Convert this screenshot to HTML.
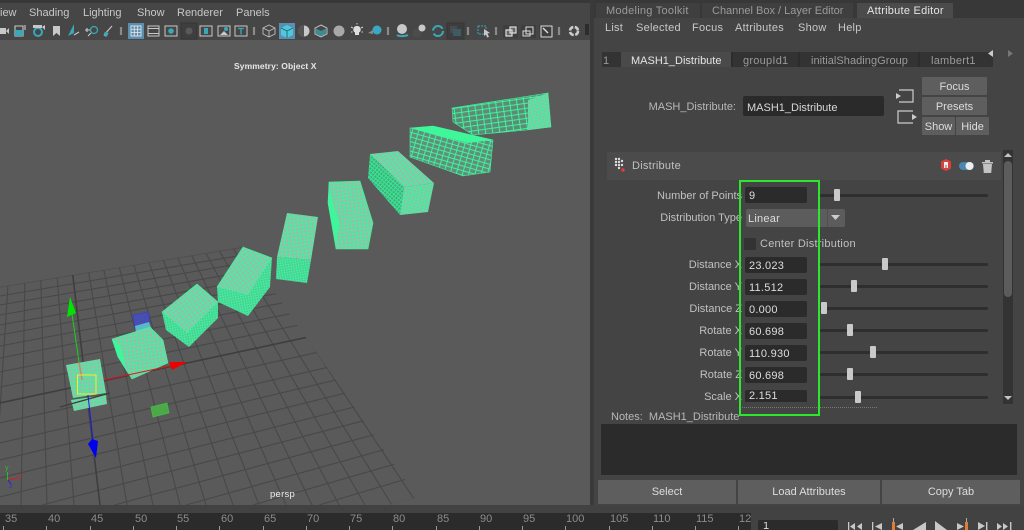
<!DOCTYPE html>
<html style="height:530px;overflow:hidden"><head><meta charset="utf-8"><style>
html,body{margin:0;padding:0;background:#444}
body{width:1024px;height:530px;overflow:hidden;position:relative;font-family:"Liberation Sans",sans-serif;font-size:11px;color:#c8c8c8}
#w{position:absolute;left:0;top:0;width:1024px;height:530px;overflow:hidden}
.a,.t{position:absolute}
.t{white-space:nowrap;line-height:14px;letter-spacing:.25px}
.z{letter-spacing:0}
.r{text-align:right}
.f{position:absolute;background:#2b2b2b;border-radius:2px;left:745px;width:62px;height:16px}
.tr{position:absolute;left:820px;width:168px;height:3px;background:#2e2e2e;border-radius:2px}
.th{position:absolute;width:6px;height:12px;background:#c9c9c9;border-radius:1px}
.b{position:absolute;background:#5e5e5e;text-align:center;color:#ddd;border-radius:1px}
.g{color:#9a9a9a}
</style></head><body><div id="w">
<div class="a" style="left:0;top:0;width:1024px;height:3px;background:#383838"></div>
<div class="a" style="left:0;top:3px;width:592px;height:37px;background:#464646"></div>
<div class="a" style="left:0;top:40px;width:590px;height:465px;background:#5a5a5a"></div>
<div class="a" style="left:590px;top:0;width:4px;height:505px;background:#3a3a3a"></div>

<div class="t z" style="left:0;top:6px">iew</div>
<div class="t z" style="left:29px;top:6px">Shading</div>
<div class="t z" style="left:83px;top:6px">Lighting</div>
<div class="t z" style="left:137px;top:6px">Show</div>
<div class="t z" style="left:177px;top:6px">Renderer</div>
<div class="t z" style="left:236px;top:6px">Panels</div>

<svg class="a" style="left:0;top:0" width="1024" height="530" viewBox="0 0 1024 530">
<defs>
<clipPath id="gc"><polygon points="-400,353 243,247 417,497 390,505 -400,505"/></clipPath>
<pattern id="m1" width="4" height="3.500" patternUnits="userSpaceOnUse" patternTransform="rotate(-8)"><rect width="4" height="3.500" fill="#98bcac"/><path d="M0 .5H4M.5 0V3.500" stroke="#44f09c" stroke-width="1" fill="none"/></pattern>
<pattern id="m2" width="3.500" height="3" patternUnits="userSpaceOnUse" patternTransform="rotate(15)"><rect width="3.500" height="3" fill="#8cc0a9"/><path d="M0 .5H3.500M.5 0V3" stroke="#44f09c" stroke-width="1" fill="none"/></pattern>
<pattern id="m3" width="3" height="3" patternUnits="userSpaceOnUse" patternTransform="rotate(40)"><rect width="3" height="3" fill="#46a980"/><path d="M0 .5H3M.5 0V3" stroke="#36e890" stroke-width="1" fill="none"/></pattern>
<pattern id="m4" width="4" height="3.500" patternUnits="userSpaceOnUse" patternTransform="rotate(-35)"><rect width="4" height="3.500" fill="#98bcac"/><path d="M0 .5H4M.5 0V3.500" stroke="#46f0a0" stroke-width="1" fill="none"/></pattern>
<pattern id="m5" width="7" height="5" patternUnits="userSpaceOnUse" patternTransform="rotate(-8)"><rect width="7" height="5" fill="#5e8b78"/><path d="M0 .5H7M.5 0V5" stroke="#3cf59a" stroke-width="1" fill="none"/></pattern>
<pattern id="m6" width="6" height="4.500" patternUnits="userSpaceOnUse" patternTransform="rotate(16)"><rect width="6" height="4.500" fill="#638e7c"/><path d="M0 .5H6M.5 0V4.500" stroke="#3cf59a" stroke-width="1" fill="none"/></pattern>
<pattern id="m7" width="2.500" height="2.500" patternUnits="userSpaceOnUse" patternTransform="rotate(-10)"><rect width="2.500" height="2.500" fill="#52c496"/><path d="M0 .5H2.500M.5 0V2.500" stroke="#3cf59a" stroke-width=".8" fill="none"/></pattern>
</defs>

<g clip-path="url(#gc)" fill="none" stroke="#484848" stroke-width="1.100">
<path d="M2350 -100L0 287M2350 -100L0 296M2350 -100L0 305M2350 -100L0 315M2350 -100L0 325M2350 -100L0 335M2350 -100L0 346M2350 -100L0 358M2350 -100L0 372M2350 -100L0 387M2350 -100L0 423M2350 -100L0 443M2350 -100L0 460M2350 -100L0 478M2350 -100L0 497M2350 -100L42 505M2350 -100L114.500 505M2350 -100L186 505M2350 -100L253 505M2350 -100L319 505M2350 -100L392 505"/>
<path d="M31 -78L-6 505M31 -78L21 505M31 -78L47 505M31 -78L74 505M31 -78L127 505M31 -78L153 505M31 -78L180 505M31 -78L206 505M31 -78L233 505M31 -78L259 505M31 -78L286 505M31 -78L312 505M31 -78L339 505M31 -78L365 505M31 -78L392 505M31 -78L418 505"/>
<path d="M2350 -100L0 403M31 -78L100 505" stroke="#3e3e3e" stroke-width="1.600"/>
</g>

<!-- boxes -->
<polygon points="452,108 548,93 551,127 527,130 473,135 453,122" fill="url(#m5)" stroke="#3cf59a" stroke-width=".6"/>
<polygon points="528,100 548,93 551,127 528,130" fill="url(#m2)"/>
<polygon points="410,128 433,126 493,140 490,172 463,176 410,157" fill="url(#m6)" stroke="#3cf59a" stroke-width=".6"/>
<polygon points="410,128 433,126 493,140 468,143" fill="#3ff79a"/>
<polygon points="370,154 398,151 434,183 404,187" fill="url(#m4)"/>
<polygon points="370,154 404,187 400,215 368,178" fill="url(#m3)"/>
<polygon points="404,187 434,183 428,212 400,215" fill="url(#m2)"/>
<polygon points="329,182 360,181 373,223 368,249 336,249 328,203" fill="url(#m1)" stroke="#3cf59a" stroke-width=".6"/>
<polygon points="329,190 328,203 336,245 339,223" fill="#3ff79a"/>
<polygon points="287,213 318,217 311,260 277,257" fill="url(#m1)"/>
<polygon points="277,257 311,260 307,283 276,279" fill="url(#m7)"/>
<polygon points="243,247 272,258 248,295 217,287" fill="url(#m4)" stroke="#3cf59a" stroke-width=".6"/>
<polygon points="272,258 270,287 248,316 248,295" fill="url(#m7)"/>
<polygon points="217,287 248,295 248,316 218,302" fill="url(#m7)"/>
<polygon points="133,315 148,312 150,322 135,328" fill="#4750b0" stroke="#3a3fd0" stroke-width=".8"/>
<polygon points="135,326 149,322 151,328 136,333" fill="#5ab8c8"/>
<polygon points="162,312 197,284 218,302 187,333" fill="url(#m4)" stroke="#3cf59a" stroke-width=".6"/>
<polygon points="218,302 218,318 189,347 187,333" fill="url(#m7)"/>
<polygon points="162,312 187,333 189,347 166,330" fill="url(#m7)"/>
<polygon points="112,339 150,327 163,340 168,363 132,379 118,357" fill="url(#m1)" stroke="#46f0a0" stroke-width=".6"/>
<polygon points="112,339 120,345 127,372 118,357" fill="#3ff79a"/>
<polygon points="66,365 100,359 106,393 73,398" fill="url(#m1)"/>
<polygon points="71,400 106,395 107,404 74,411" fill="url(#m1)"/>
<path d="M60 407L110 393" stroke="#3e3e3e" stroke-width="1.400"/>
<polygon points="151,407 167,403 169,413 153,417" fill="#4da84a" stroke="#3cc03c" stroke-width=".8"/>

<!-- manipulator -->
<path d="M79 362L72 314" stroke="#19d019" stroke-width="1"/>
<polygon points="70,297 76,313 67,317" fill="#00e400"/>
<path d="M79 362L82 380" stroke="#e86a4a" stroke-width="1.500" opacity=".7"/>
<path d="M104 380L170 366" stroke="#e01414" stroke-width="1"/>
<polygon points="169,362 187,362 172,370" fill="#ee0000"/>
<path d="M88 395L93 440" stroke="#1a1ae0" stroke-width="1"/>
<polygon points="88,444 92,439 98,441 96,458" fill="#0000f0"/>
<rect x="77.500" y="375" width="18.500" height="19" fill="none" stroke="#eef020" stroke-width="1"/>

<!-- axis -->
<path d="M7.500 480V472" stroke="#20c020" stroke-width="1"/>
<path d="M8 480L19 478" stroke="#d02020" stroke-width="1"/>
<path d="M8 480L11 484" stroke="#2020d0" stroke-width="1"/>
<text x="5" y="470" font-size="7" fill="#30c030" font-family="Liberation Sans">y</text>
<text x="18" y="478" font-size="7" fill="#c83030" font-family="Liberation Sans">x</text>
<text x="9" y="488" font-size="7" fill="#3030d8" font-family="Liberation Sans">z</text>

<!-- toolbar icons -->
<g fill="none" stroke="#c8c8c8" stroke-width="1.100">
<path d="M0 28h6v6H0z" fill="#c8c8c8" stroke="none"/><path d="M6 31l3-3v6z" fill="#c8c8c8" stroke="none"/>
<path d="M15 26h8v10h-8z M25 25v5" stroke="#c8c8c8"/><rect x="15" y="30" width="8" height="6" fill="#3aa8b8" stroke="none"/>
<circle cx="38" cy="32" r="4" stroke="#3aa8b8" stroke-width="2"/><path d="M33 25h9v3h-9z" fill="#c8c8c8" stroke="none"/><path d="M42 27l3-2v5z" fill="#c8c8c8" stroke="none"/>
<path d="M53 26h7v10l-3.500-3-3.500 3z" fill="#c8c8c8" stroke="none"/>
<path d="M68 36l6-12v9z" fill="#3aa8b8" stroke="none"/><path d="M74 35l5-3" stroke="#c8c8c8"/>
<circle cx="94" cy="30" r="3.500" stroke="#3aa8b8" stroke-width="1.300"/><path d="M91 33l-3 3M85 30h5M87 28v4" stroke="#c8c8c8"/>
<path d="M104 35l8-9M104 35l2 1 2-3" stroke="#c8c8c8"/><circle cx="106" cy="34" r="2" fill="#3aa8b8" stroke="none"/>
<path d="M121 27v8M254 27v8M388 27v8M468 27v8M496 27v8M559 27v8" stroke="#8a8a8a" stroke-width="2.200"/>
</g>
<rect x="128" y="23" width="16" height="16" fill="#5a8fb0"/>
<path d="M131 26h10v10h-10zM134.300 26v10M137.600 26v10M131 29.300h10M131 32.600h10" stroke="#e0e0e0" stroke-width=".9" fill="none"/>
<rect x="148" y="26" width="11" height="10" fill="none" stroke="#c8c8c8"/><path d="M148 28.500h11M148 33.500h11" stroke="#c8c8c8"/>
<rect x="165" y="26" width="12" height="10" fill="none" stroke="#c8c8c8"/><circle cx="171" cy="31" r="2.800" fill="#3aa8b8"/>
<rect x="181" y="23" width="16" height="16" fill="#3e3e3e" stroke="#363636"/><circle cx="189" cy="31" r="3.500" fill="#595959"/>
<rect x="200" y="26" width="12" height="10" fill="none" stroke="#c8c8c8"/><rect x="204" y="28" width="4" height="6" fill="#3aa8b8"/>
<rect x="218" y="26" width="12" height="10" fill="none" stroke="#c8c8c8"/><path d="M220 35l4-4 4 4z" fill="#c8c8c8"/><circle cx="226" cy="29" r="2" fill="#3aa8b8"/>
<rect x="235" y="26" width="12" height="10" fill="none" stroke="#c8c8c8"/><path d="M238 28.500h6M241 28.500v6" stroke="#3aa8b8" stroke-width="1.300"/>
<path d="M269 25l6 3v6l-6 3-6-3v-6zM263 28l6 3 6-3M269 31v6" fill="none" stroke="#c0c0c0" stroke-width=".9"/>
<rect x="279" y="23" width="16" height="16" fill="#5a8fb0"/>
<path d="M287 25l6 3v7l-6 3-6-3v-7z" fill="#4ec8dc"/><path d="M281 28l6 3 6-3M287 31v7" fill="none" stroke="#2c5f70" stroke-width=".9"/>
<circle cx="304" cy="31" r="5.500" fill="#c8c8c8"/><path d="M304 25.500a5.500 5.500 0 0 0 0 11z" fill="#555"/>
<path d="M321 25l6 3v6l-6 3-6-3v-6z" fill="none" stroke="#c0c0c0"/><path d="M316 28.500l5 2.500 5-2.500v5l-5 3-5-3z" fill="#3aa8b8" opacity=".7"/>
<circle cx="339" cy="31" r="5.500" fill="#a8a8a8"/>
<path d="M357 26a3.500 3.500 0 0 1 2 6.500v2.500h-4v-2.500a3.500 3.500 0 0 1 2-6.500z" fill="#ddd"/><path d="M351 27l2 1M363 27l-2 1M357 23v1.500M351 32h1.500M361.500 32h1.500" stroke="#ccc"/>
<circle cx="377" cy="30" r="4.500" fill="#3aa8c0"/><path d="M368 33l5-3v4z" fill="#8a8a8a"/>
<circle cx="402" cy="29" r="5" fill="#c8c8c8"/><path d="M397 35c2 1.500 8 1.500 11 0" stroke="#3aa8b8" stroke-width="2" fill="none"/>
<circle cx="417" cy="33" r="4.500" fill="#4c4c4c"/><circle cx="422" cy="28" r="3.500" fill="#c8c8c8"/>
<circle cx="438" cy="31" r="5" fill="none" stroke="#3aa8b8" stroke-width="2" stroke-dasharray="13 3"/>
<rect x="447" y="23" width="17" height="16" fill="#3d3d3d" stroke="#363636"/><rect x="450" y="26" width="7" height="7" fill="#4a4a4a"/><rect x="453" y="29" width="8" height="7" fill="#3e5a66"/>
<rect x="478" y="26" width="8" height="8" fill="none" stroke="#3aa8b8" stroke-dasharray="2 1"/><path d="M484 29l6 4-2.500.5L489 37l-2 .5-1-3-2 1.500z" fill="#c8c8c8"/>
<rect x="503" y="25" width="15" height="13" fill="#3e3e3e"/><path d="M510 27h6v6h-6zM506 30h6v6h-6z" stroke="#ddd" stroke-width="1.200" fill="#666"/>
<rect x="521" y="25" width="15" height="13" fill="#3e3e3e"/><path d="M526 27h7v7h-7zM523 31h7v5h-7z" stroke="#ddd" fill="none"/>
<rect x="539" y="25" width="14" height="13" fill="#3e3e3e"/><rect x="541" y="26" width="11" height="11" fill="none" stroke="#ddd"/><path d="M543 28l5 5" stroke="#ddd" stroke-width="1.400"/>
<circle cx="574" cy="31" r="4" fill="none" stroke="#ccc" stroke-width="2.600" stroke-dasharray="5 1.500"/>
<rect x="585" y="24" width="4" height="11" fill="#2c2c2c"/>
</svg>

<div class="t" style="left:234px;top:59px;font-size:8.500px;color:#e8e8e8;letter-spacing:.1px;font-weight:bold">Symmetry: Object X</div>
<div class="t" style="left:270px;top:488px;font-size:9.500px;color:#eee">persp</div>

<!-- right panel tabs -->
<div class="a" style="left:594px;top:0;width:430px;height:18px;background:#383838"></div>
<div class="a" style="left:596px;top:3px;width:104px;height:15px;background:#3f3f3f"></div>
<div class="a" style="left:702px;top:3px;width:151px;height:15px;background:#3f3f3f"></div>
<div class="a" style="left:857px;top:3px;width:96px;height:15px;background:#4b4b4b"></div>
<div class="t g" style="left:606px;top:4px">Modeling Toolkit</div>
<div class="t g z" style="left:712px;top:4px">Channel Box / Layer Editor</div>
<div class="t" style="left:867px;top:4px;color:#e4e4e4">Attribute Editor</div>
<div class="a" style="left:594px;top:18px;width:430px;height:487px;background:#444"></div>
<div class="t" style="left:605px;top:21px">List</div>
<div class="t" style="left:636px;top:21px">Selected</div>
<div class="t" style="left:692px;top:21px">Focus</div>
<div class="t" style="left:735px;top:21px">Attributes</div>
<div class="t" style="left:798px;top:21px">Show</div>
<div class="t" style="left:838px;top:21px">Help</div>

<div class="a" style="left:602px;top:52px;width:391px;height:15px;background:#333"></div>
<div class="a" style="left:621px;top:52px;width:110px;height:15px;background:#4a4a4a"></div>
<div class="a" style="left:731px;top:52px;width:2px;height:15px;background:#2c2c2c"></div>
<div class="a" style="left:798px;top:52px;width:2px;height:15px;background:#2c2c2c"></div>
<div class="a" style="left:918px;top:52px;width:2px;height:15px;background:#2c2c2c"></div>
<div class="t g" style="left:603px;top:54px">1</div>
<div class="t z" style="left:631px;top:54px;color:#e4e4e4">MASH1_Distribute</div>
<div class="t g" style="left:743px;top:54px">groupId1</div>
<div class="t g" style="left:811px;top:54px;letter-spacing:.05px">initialShadingGroup</div>
<div class="t g" style="left:931px;top:54px">lambert1</div>
<svg class="a" style="left:985px;top:48px" width="30" height="12"><path d="M8 2v7l-5-3.500z" fill="#ccc"/><path d="M23 2v7l5-3.500z" fill="#777"/></svg>

<div class="t r z" style="left:610px;top:100px;width:126px;color:#b8b8b8">MASH_Distribute:</div>
<div class="a" style="left:743px;top:96px;width:141px;height:20px;background:#2a2a2a;border-radius:2px"></div>
<div class="t z" style="left:747px;top:101px;color:#d8d8d8">MASH1_Distribute</div>
<svg class="a" style="left:894px;top:86px" width="24" height="40"><path d="M5 4h14v12H5" fill="none" stroke="#ccc" stroke-width="1.200"/><path d="M2 7l5 3-5 3z" fill="#ccc"/><path d="M19 25H4v12h15" fill="none" stroke="#ccc" stroke-width="1.200"/><path d="M18 28l5 3-5 3z" fill="#ccc"/></svg>
<div class="b" style="left:922px;top:77px;width:65px;height:18px;line-height:20px">Focus</div>
<div class="b" style="left:922px;top:97px;width:65px;height:18px;line-height:20px">Presets</div>
<div class="b" style="left:922px;top:117px;width:33px;height:18px;line-height:20px">Show</div>
<div class="b" style="left:956px;top:117px;width:33px;height:18px;line-height:20px">Hide</div>

<div class="a" style="left:607px;top:152px;width:394px;height:28px;background:#4b4b4b"></div>
<svg class="a" style="left:614px;top:157px" width="20" height="18"><g fill="#ddd"><circle cx="2" cy="2" r="1.200"/><circle cx="5" cy="2" r="1.200"/><circle cx="8" cy="4" r="1.200"/><circle cx="2" cy="5" r="1.200"/><circle cx="5" cy="5" r="1.200"/><circle cx="2" cy="8" r="1.200"/><circle cx="5" cy="8" r="1.200"/><circle cx="8" cy="8" r="1.200"/><circle cx="5" cy="11" r="1.200"/></g><circle cx="9" cy="13" r="1.700" fill="#e83a3a"/></svg>
<div class="t" style="left:632px;top:159px;color:#c0c0c0">Distribute</div>
<svg class="a" style="left:938px;top:157px" width="60" height="18"><path d="M8 2l5 2.500v7L8 14l-5-2.500v-7z" fill="#d8403c"/><path d="M6 5v6h1.500V8h1v3H10V5z" fill="#eee"/><rect x="21" y="5" width="15" height="8" rx="4" fill="#4d86ad"/><circle cx="31.500" cy="9" r="4" fill="#eee"/><path d="M44 5h11v1.500H44zM47 3h5v2h-5zM45 7h9l-.8 9h-7.400z" fill="#c4c4c4"/></svg>

<div class="a" style="left:1003px;top:150px;width:10px;height:254px;background:#333"></div>
<div class="a" style="left:1004px;top:161px;width:8px;height:136px;background:#5c5c5c;border-radius:4px"></div>
<svg class="a" style="left:1003px;top:150px" width="10" height="254"><path d="M1 7l4-4 4 4zM1 246h8l-4 4z" fill="#c4c4c4"/></svg>

<div class="t r z" style="left:620px;top:189px;width:122px;color:#c0c0c0">Number of Points</div>
<div class="t r z" style="left:620px;top:211px;width:122px;color:#c0c0c0">Distribution Type</div>
<div class="t r z" style="left:620px;top:258px;width:122px;color:#c0c0c0">Distance X</div>
<div class="t r z" style="left:620px;top:280px;width:122px;color:#c0c0c0">Distance Y</div>
<div class="t r z" style="left:620px;top:302px;width:122px;color:#c0c0c0">Distance Z</div>
<div class="t r z" style="left:620px;top:324px;width:122px;color:#c0c0c0">Rotate X</div>
<div class="t r z" style="left:620px;top:346px;width:122px;color:#c0c0c0">Rotate Y</div>
<div class="t r z" style="left:620px;top:368px;width:122px;color:#c0c0c0">Rotate Z</div>
<div class="t r z" style="left:620px;top:390px;width:122px;color:#c0c0c0">Scale X</div>

<div class="f" style="top:187px"></div>
<div class="a" style="left:746px;top:209px;width:99px;height:18px;background:#5c5c5c;border-radius:2px"></div>
<div class="a" style="left:827px;top:209px;width:1px;height:18px;background:#505050"></div>
<svg class="a" style="left:829px;top:214px" width="14" height="8"><path d="M2 1h9L6.500 6z" fill="#ccc"/></svg>
<div class="a" style="left:744px;top:238px;width:12px;height:12px;background:#333;border-radius:1px"></div>
<div class="f" style="top:257px"></div>
<div class="f" style="top:279px"></div>
<div class="f" style="top:301px"></div>
<div class="f" style="top:323px"></div>
<div class="f" style="top:345px"></div>
<div class="f" style="top:367px"></div>
<div class="f" style="top:390px;height:12px;border-radius:2px 2px 0 0"></div>

<div class="t" style="left:749px;top:189px;color:#ddd">9</div>
<div class="t" style="left:748px;top:212px;color:#ddd">Linear</div>
<div class="t" style="left:760px;top:237px;color:#c0c0c0">Center Distribution</div>
<div class="t" style="left:749px;top:259px;color:#ddd">23.023</div>
<div class="t" style="left:749px;top:281px;color:#ddd">11.512</div>
<div class="t" style="left:749px;top:303px;color:#ddd">0.000</div>
<div class="t" style="left:749px;top:325px;color:#ddd">60.698</div>
<div class="t" style="left:749px;top:347px;color:#ddd">110.930</div>
<div class="t" style="left:749px;top:369px;color:#ddd">60.698</div>
<div class="a" style="left:749px;top:390px;width:55px;height:12px;overflow:hidden"><div class="t" style="left:0;top:0;line-height:12px;color:#ddd">2.151</div></div>

<div class="tr" style="top:194px"></div><div class="th" style="left:834px;top:189px"></div>
<div class="tr" style="top:263px"></div><div class="th" style="left:882px;top:258px"></div>
<div class="tr" style="top:285px"></div><div class="th" style="left:851px;top:280px"></div>
<div class="tr" style="top:307px"></div><div class="th" style="left:821px;top:302px"></div>
<div class="tr" style="top:329px"></div><div class="th" style="left:847px;top:324px"></div>
<div class="tr" style="top:351px"></div><div class="th" style="left:870px;top:346px"></div>
<div class="tr" style="top:373px"></div><div class="th" style="left:847px;top:368px"></div>
<div class="tr" style="top:396px"></div><div class="th" style="left:855px;top:391px"></div>
<div class="a" style="left:742px;top:407px;width:135px;border-top:1px dotted #777"></div>

<div class="a" style="left:739px;top:180px;width:77px;height:232px;border:2px solid #2ce82c"></div>

<div class="t z" style="left:611px;top:410px;color:#b8b8b8">Notes:&nbsp; MASH1_Distribute</div>
<div class="a" style="left:601px;top:424px;width:416px;height:51px;background:#2b2b2b"></div>
<div class="b" style="left:598px;top:480px;width:138px;height:24px;line-height:24px">Select</div>
<div class="b" style="left:738px;top:480px;width:142px;height:24px;line-height:24px">Load Attributes</div>
<div class="b" style="left:882px;top:480px;width:138px;height:24px;line-height:24px">Copy Tab</div>

<!-- timeline -->
<div class="a" style="left:0;top:505px;width:1024px;height:25px;background:#424242"></div>
<div class="a" style="left:0;top:513px;width:751px;height:17px;background:#2b2b2b"></div>
<div class="a g" style="left:0;top:512px;width:751px;height:14px;color:#8c8c8c;font-size:11px;line-height:14px">
<span class="a" style="left:5px">35</span><span class="a" style="left:48px">40</span><span class="a" style="left:91px">45</span><span class="a" style="left:135px">50</span><span class="a" style="left:177px">55</span><span class="a" style="left:221px">60</span><span class="a" style="left:264px">65</span><span class="a" style="left:307px">70</span><span class="a" style="left:350px">75</span><span class="a" style="left:393px">80</span><span class="a" style="left:437px">85</span><span class="a" style="left:480px">90</span><span class="a" style="left:523px">95</span><span class="a" style="left:566px">100</span><span class="a" style="left:610px">105</span><span class="a" style="left:653px">110</span><span class="a" style="left:696px">115</span><span class="a" style="left:739px">12</span>
</div>
<svg class="a" style="left:0;top:526px" width="751" height="4"><path d="M3.500 0v4M46.500 0v4M90.500 0v4M133.500 0v4M176.500 0v4M219.500 0v4M263.500 0v4M306.500 0v4M349.500 0v4M392.500 0v4M436.500 0v4M479.500 0v4M522.500 0v4M565.500 0v4M609.500 0v4M652.500 0v4M695.500 0v4M738.500 0v4" stroke="#999"/></svg>
<div class="a" style="left:758px;top:520px;width:80px;height:10px;background:#2b2b2b;border-radius:2px 2px 0 0"></div>
<div class="t" style="left:763px;top:522px;height:8px;line-height:8px;overflow:hidden;color:#ddd">1</div>
<svg class="a" style="left:840px;top:518px;display:block" width="184" height="12">
<g fill="#c8c8c8">
<path d="M8 4h1.300v8H8zM15 5v7l-5-3.500zM22 5v7l-5-3.500z"/>
<path d="M32 4h1.300v8H32zM42 5v7l-7-3.500z"/>
<path d="M63 5v7l-7-3.500z"/>
<path d="M86 4v8H73z"/>
<path d="M95 3l12 9H95z"/>
<path d="M117 5l7 3.500-7 3.500z"/>
<path d="M138 4l7 4-7 4zM146 4h1.400v8H146z"/>
<path d="M157 5l5 3.500-5 3.500zM163 5l5 3.500-5 3.500zM170 4h1.400v8H170z"/>
</g>
<path d="M52 4h3v8h-3zM125 4h3v8h-3z" fill="#e07b3a"/><path d="M53 0h1v4h-1zM126 0h1v4h-1z" fill="#aaa"/>
</svg>
</div></body></html>
